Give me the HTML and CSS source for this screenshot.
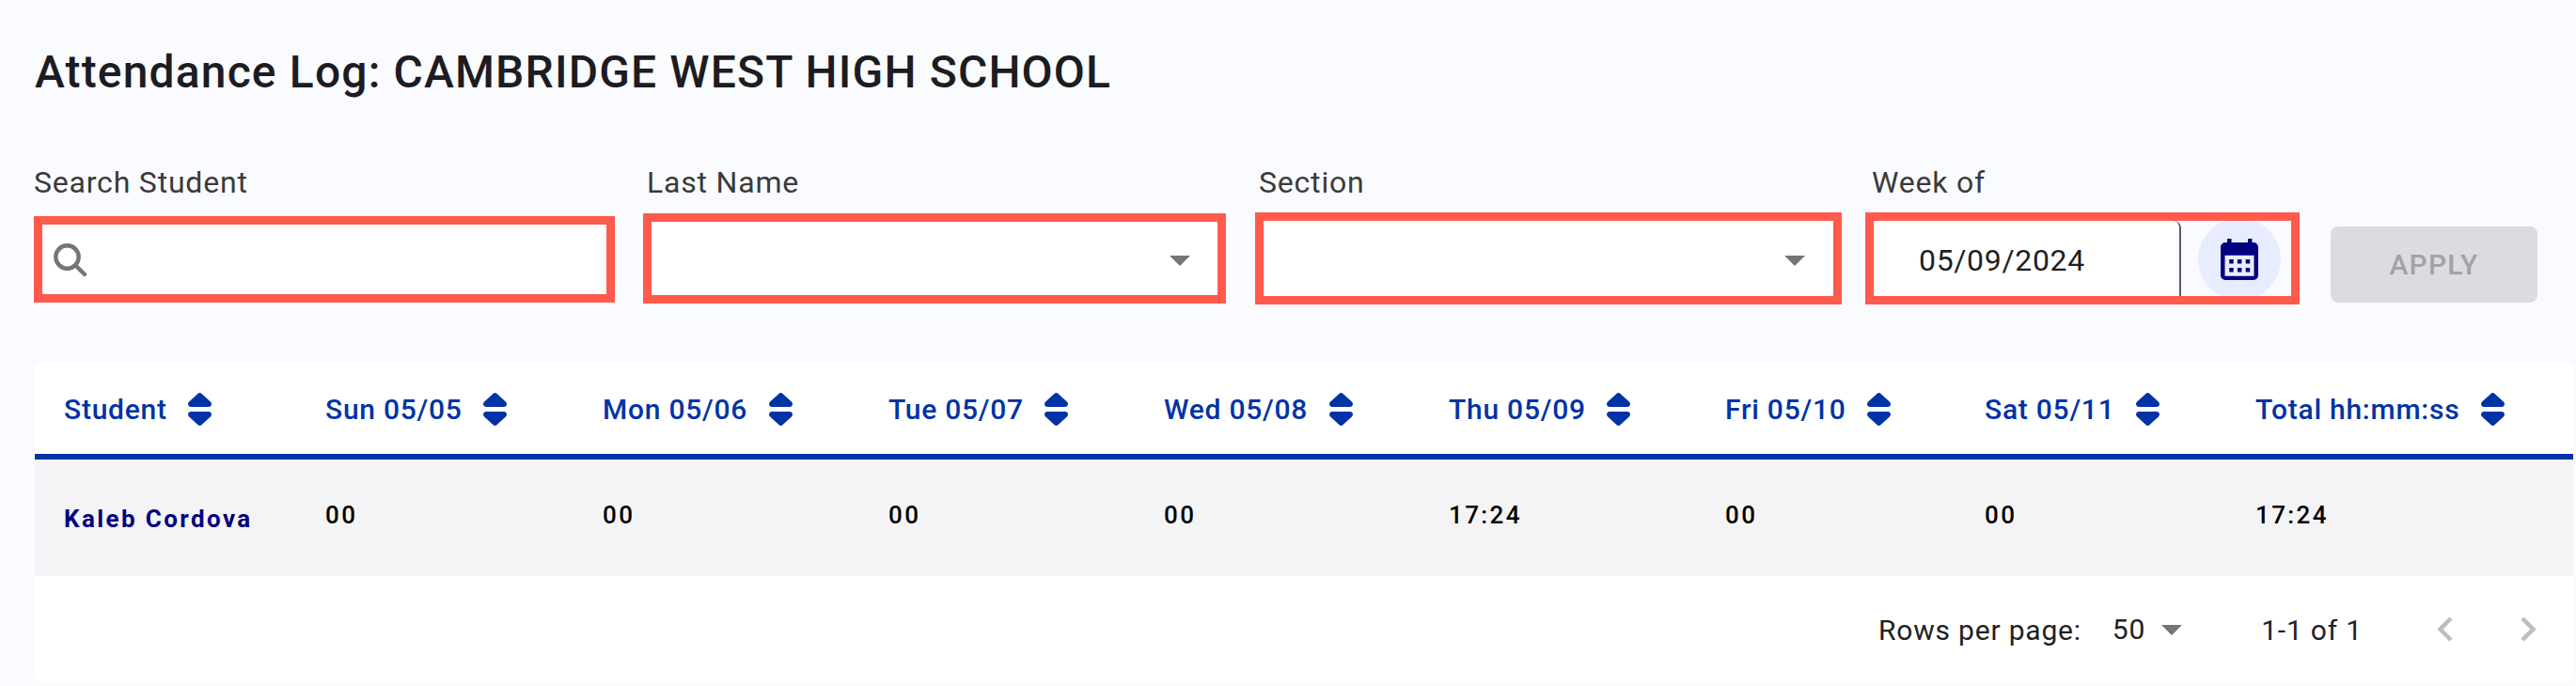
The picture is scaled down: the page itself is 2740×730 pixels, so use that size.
FILE: index.html
```html
<!DOCTYPE html>
<html lang="en">
<head>
    <meta charset="UTF-8">
    <title>Attendance Log</title>
    <link rel="stylesheet" href="styles.css">
</head>
<body>
    <svg class="sprite">
        <symbol id="sort" viewBox="0 0 25 35">
            <path d="M10.7 .8 L.9 9.8 Q-.4 11.3 .2 13 Q.8 15 3 15 H22 Q24.2 15 24.8 13 Q25.4 11.3 24.1 9.8 L14.3 .8 Q12.5 -.6 10.7 .8Z"/>
            <path d="M10.7 34.2 L.9 25.2 Q-.4 23.7 .2 22 Q.8 20 3 20 H22 Q24.2 20 24.8 22 Q25.4 23.7 24.1 25.2 L14.3 34.2 Q12.5 35.6 10.7 34.2Z"/>
        </symbol>
    </svg>
    <h1 class="title">Attendance Log: CAMBRIDGE WEST HIGH SCHOOL</h1>
    <form class="filters">
        <div class="field field-search">
            <label>Search Student</label>
            <div class="box">
                <svg class="search-icon" viewBox="0 0 36 36"><circle cx="14.5" cy="14.5" r="12.2" fill="none" stroke="#757575" stroke-width="4.4"/><path d="M23.5 23.5 L33 33" stroke="#757575" stroke-width="4.4" stroke-linecap="round"/></svg>
            </div>
        </div>
        <div class="field field-name">
            <label>Last Name</label>
            <div class="box"><i class="caret"></i></div>
        </div>
        <div class="field field-section">
            <label>Section</label>
            <div class="box"><i class="caret"></i></div>
        </div>
        <div class="field field-week">
            <label>Week of</label>
            <div class="box">
                <div class="date">05/09/2024</div>
                <div class="calendar">
                    <svg viewBox="0 0 40 44"><path fill="#000080" fill-rule="evenodd" d="M7 0h4.500v4h17.500V0h4.500v4h1.500a5 5 0 0 1 5 5v30a5 5 0 0 1-5 5H5a5 5 0 0 1-5-5V9a5 5 0 0 1 5-5h2zM4.500 17.700v22h31v-22zM9.200 22h4.500v4.500H9.200zm8.700 0h4.500v4.500h-4.500zm8.800 0h4.500v4.500h-4.500zM9.200 31h4.500v4.500H9.200zm8.700 0h4.500v4.500h-4.500zm8.800 0h4.500v4.500h-4.500z"/></svg>
                </div>
            </div>
        </div>
        <button type="button" class="apply" disabled>APPLY</button>
    </form>
    <div class="card">
        <table>
            <colgroup>
                <col class="c0"><col class="c1"><col class="c2"><col class="c3"><col class="c4"><col class="c5"><col class="c6"><col class="c7"><col>
            </colgroup>
            <thead>
                <tr>
                    <th><div>Student<svg><use href="#sort"/></svg></div></th>
                    <th><div>Sun 05/05<svg><use href="#sort"/></svg></div></th>
                    <th><div>Mon 05/06<svg><use href="#sort"/></svg></div></th>
                    <th><div>Tue 05/07<svg><use href="#sort"/></svg></div></th>
                    <th><div>Wed 05/08<svg><use href="#sort"/></svg></div></th>
                    <th><div>Thu 05/09<svg><use href="#sort"/></svg></div></th>
                    <th><div>Fri 05/10<svg><use href="#sort"/></svg></div></th>
                    <th><div>Sat 05/11<svg><use href="#sort"/></svg></div></th>
                    <th><div>Total hh:mm:ss<svg><use href="#sort"/></svg></div></th>
                </tr>
            </thead>
            <tbody>
                <tr>
                    <td class="student">Kaleb Cordova</td>
                    <td>00</td>
                    <td>00</td>
                    <td>00</td>
                    <td>00</td>
                    <td>17:24</td>
                    <td>00</td>
                    <td>00</td>
                    <td>17:24</td>
                </tr>
            </tbody>
        </table>
        <div class="pager">
            <span>Rows per page:</span>
            <span class="size">50</span>
            <i class="caret"></i>
            <span class="range">1-1 of 1</span>
            <svg class="prev" viewBox="0 0 17 27"><path d="M15 2 L3.5 13.5 L15 25"/></svg>
            <svg class="next" viewBox="0 0 17 27"><path d="M2 2 L13.5 13.5 L2 25"/></svg>
        </div>
    </div>
</body>
</html>
```
FILE: styles.css
```css
* {
    box-sizing: border-box;
}
body {
    margin: 0;
    width: 2740px;
    height: 730px;
    overflow: hidden;
    background-color: #fafbff;
    font-family: Roboto, sans-serif;
    color: #1d1c22;
}
.sprite {
    display: none;
}
.title {
    margin: 0;
    padding: 49px 0 0 37px;
    font-size: 48px;
    line-height: 56px;
    font-weight: 500;
    letter-spacing: 1.15px;
}
.filters {
    display: flex;
    align-items: flex-start;
    height: 282px;
    padding: 69px 0 0 36px;
}
.field label {
    display: block;
    height: 40px;
    line-height: 40px;
    font-size: 32px;
    letter-spacing: 0.8px;
    color: #3a3a3a;
}
.box {
    display: flex;
    align-items: center;
    background-color: #ffffff;
    border: 9px solid #ff5a4b;
}
.field-search {
    width: 618px;
    margin-right: 30px;
}
.field-search .box {
    height: 92px;
    margin-top: 16px;
    padding-left: 12px;
}
.search-icon {
    width: 36px;
    height: 36px;
    margin-top: 2px;
}
.field-name {
    width: 620px;
    margin-right: 31px;
}
.field-name label {
    padding-left: 4px;
}
.field-name .box {
    height: 96px;
    margin-top: 13px;
    justify-content: flex-end;
    padding-right: 29px;
}
.field-section {
    width: 624px;
    margin-right: 25px;
}
.field-section label {
    padding-left: 4px;
}
.field-section .box {
    height: 98px;
    margin-top: 12px;
    justify-content: flex-end;
    padding-right: 30px;
}
.caret {
    border: 11px solid transparent;
    border-top-color: #757575;
    border-bottom: 0;
    margin-top: 5px;
}
.field-week {
    width: 462px;
    margin-right: 33px;
}
.field-week label {
    padding-left: 7px;
}
.field-week .box {
    height: 98px;
    margin-top: 12px;
    background-color: #fafbff;
    overflow: hidden;
}
.date {
    width: 327px;
    height: 80px;
    padding-left: 48px;
    border-right: 2px solid #5a596b;
    border-top-right-radius: 8px;
    background-color: #ffffff;
    font-size: 32px;
    line-height: 84px;
    letter-spacing: 0.65px;
    color: #1f1f1f;
}
.calendar {
    flex-shrink: 0;
    display: flex;
    align-items: center;
    justify-content: center;
    width: 88px;
    height: 88px;
    margin: 2px 0 0 18px;
    border-radius: 50%;
    background-color: #e7edff;
}
.calendar svg {
    width: 40px;
    height: 44px;
}
.apply {
    width: 220px;
    height: 81px;
    margin-top: 67px;
    padding: 0;
    border: none;
    border-radius: 8px;
    background-color: #dcdbe0;
    color: #a3a2a6;
    font: 500 30px Roboto, sans-serif;
    letter-spacing: 1.2px;
}
.card {
    width: 2700px;
    height: 340px;
    margin-left: 37px;
    background-color: #ffffff;
    border-radius: 0 0 8px 8px;
}
table {
    width: 2700px;
    table-layout: fixed;
    border-collapse: separate;
    border-spacing: 0;
}
.c0 { width: 308px; }
.c1 { width: 295px; }
.c2 { width: 304px; }
.c3 { width: 293px; }
.c4 { width: 303px; }
.c5 { width: 294px; }
.c6 { width: 276px; }
.c7 { width: 288px; }
th {
    height: 102px;
    padding: 0 0 0 1px;
    border-bottom: 6px solid #0033a5;
    color: #0033a5;
    font-size: 30px;
    font-weight: 500;
    letter-spacing: 0.75px;
}
th div {
    display: flex;
    align-items: center;
}
th svg {
    width: 25px;
    height: 35px;
    margin-left: 22.5px;
    fill: #0033a5;
}
th:first-child,
td:first-child {
    padding-left: 31px;
}
td {
    height: 124px;
    padding: 0 0 6px 1px;
    background-color: #f4f4f6;
    color: #000000;
    font-size: 26px;
    font-weight: 500;
    letter-spacing: 2.4px;
}
.student {
    padding: 2px 0 0;
    color: #000080;
    font-weight: 700;
    letter-spacing: 2.4px;
}
.pager {
    display: flex;
    align-items: center;
    height: 114px;
    padding-left: 1961px;
    font-size: 30px;
    letter-spacing: 0.8px;
    color: #212121;
}
.size {
    margin: -2px 0 0 33px;
}
.pager .caret {
    margin: 0 0 0 17px;
}
.range {
    margin-left: 84px;
}
.pager svg {
    width: 17px;
    height: 27px;
    margin-top: -2px;
    fill: none;
    stroke: #bdbdbd;
    stroke-width: 4.5;
}
.prev {
    margin-left: 79px;
}
.next {
    margin-left: 72.5px;
}
```
